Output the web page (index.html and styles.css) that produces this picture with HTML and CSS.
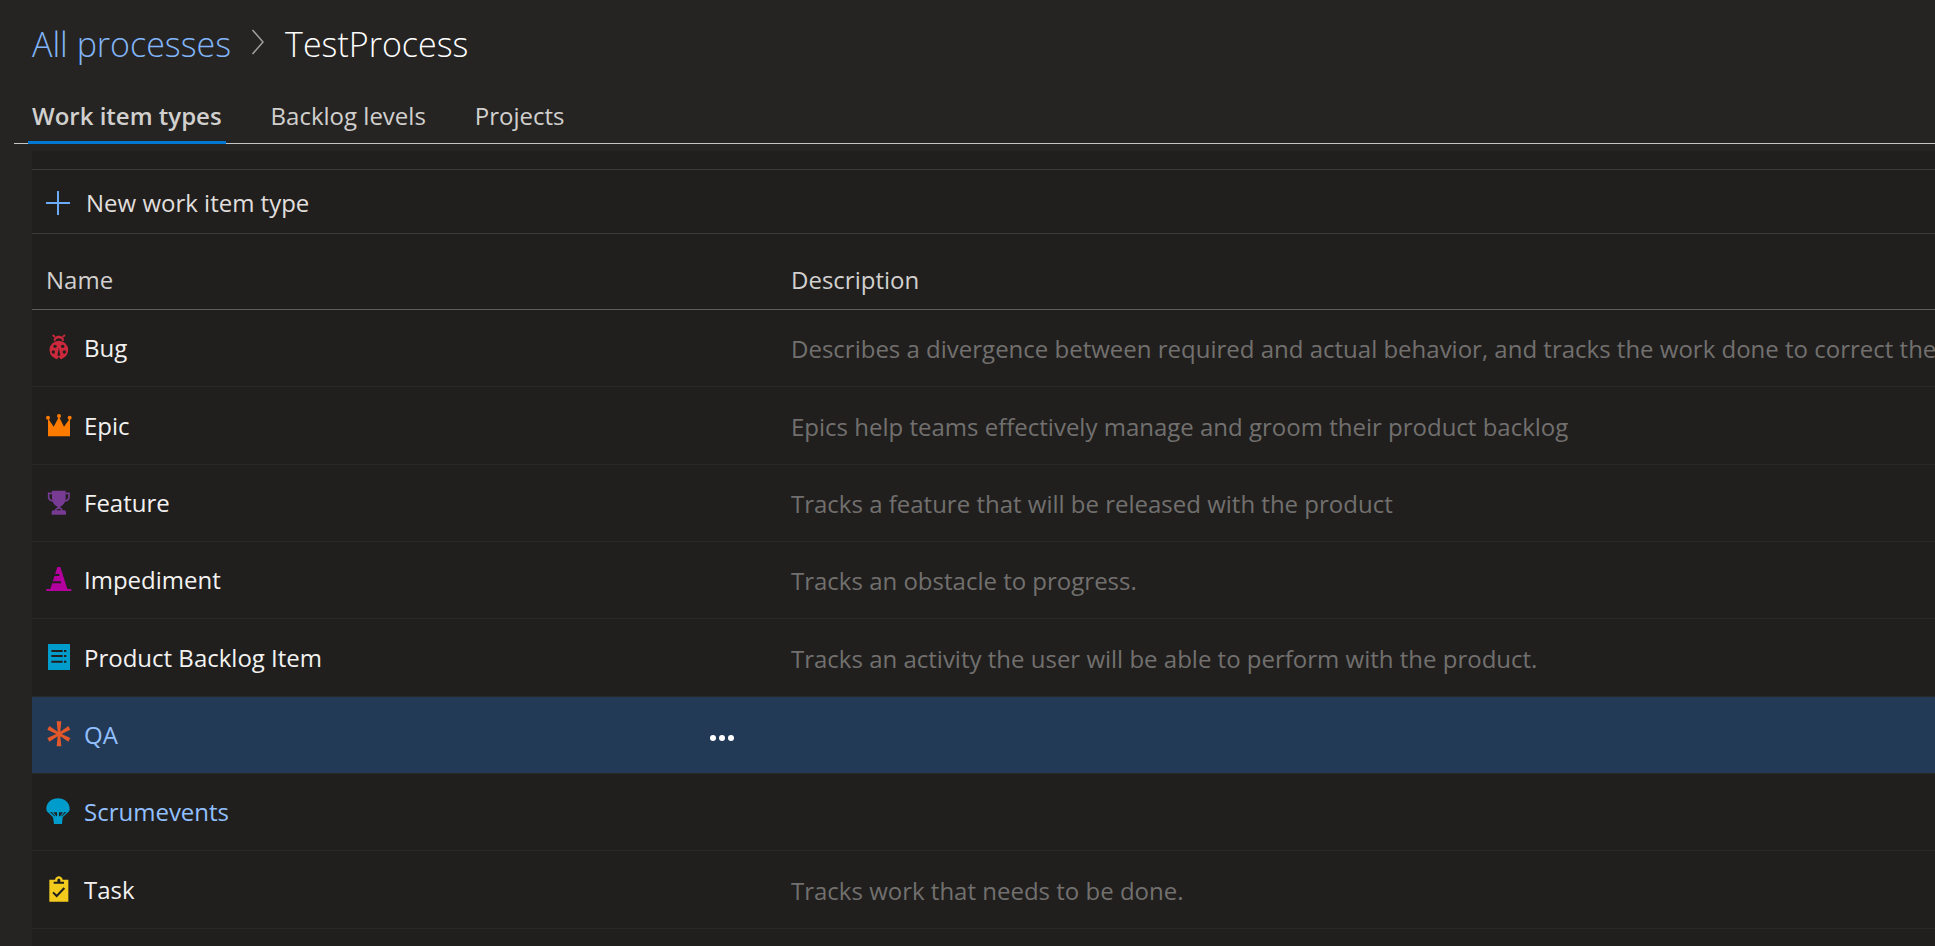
FILE: index.html
```html
<!DOCTYPE html>
<html lang="en">
<head>
    <meta charset="UTF-8">
    <meta name="viewport" content="width=device-width, initial-scale=1.0">
    <title>TestProcess - Work item types</title>
    <link rel="stylesheet" href="styles.css">
</head>
<body>
    <header class="breadcrumb">
        <a href="#" class="parent">All processes</a>
        <svg class="chevron" viewBox="0 0 14 26" aria-hidden="true"><path d="M1.5 1 L12 13 L1.5 25"/></svg>
        <h1>TestProcess</h1>
    </header>

    <nav class="tabs">
        <a href="#" class="tab active">Work item types</a>
        <a href="#" class="tab">Backlog levels</a>
        <a href="#" class="tab">Projects</a>
    </nav>

    <main class="content">
        <div class="toolbar">
            <button type="button" class="new-type">
                <svg class="plus" viewBox="0 0 24 24" aria-hidden="true"><path d="M12 0 V24 M0 12 H24"/></svg>
                New work item type
            </button>
        </div>

        <table class="types">
            <thead>
                <tr>
                    <th class="col-name">Name</th>
                    <th>Description</th>
                </tr>
            </thead>
            <tbody>
                <tr>
                    <td>
                        <div class="name">
                            <svg class="icon bug" viewBox="45 40 84 84" aria-hidden="true">
                                <path class="line" d="M68 43 L75 49 M105 43 L98 49"/>
                                <path fill="currentColor" d="M71 60 C71 40 102 40 102 60 L97 61 C96 50 77 50 76 61 Z"/>
                                <ellipse cx="86.5" cy="88" rx="28" ry="28" fill="currentColor"/>
                                <g class="hole">
                                    <circle cx="75" cy="77" r="5"/>
                                    <circle cx="98" cy="77" r="5"/>
                                    <circle cx="70" cy="94" r="5"/>
                                    <circle cx="103" cy="94" r="5"/>
                                    <path d="M86.5 82 L91 105 H82 Z"/>
                                    <path d="M80 117 L86.5 108 L93 117 Z"/>
                                </g>
                            </svg>
                            <a href="#">Bug</a>
                        </div>
                    </td>
                    <td class="desc">Describes a divergence between required and actual behavior, and tracks the work done to correct the</td>
                </tr>
                <tr>
                    <td>
                        <div class="name">
                            <svg class="icon epic" viewBox="45 273 84 84" aria-hidden="true">
                                <path fill="currentColor" d="M54 346 V292 L71 317 L87 287 L102 317 L120 292 V346 Z"/>
                                <circle cx="54" cy="290" r="6" fill="currentColor"/>
                                <circle cx="87" cy="285" r="6" fill="currentColor"/>
                                <circle cx="119" cy="290" r="6" fill="currentColor"/>
                            </svg>
                            <a href="#">Epic</a>
                        </div>
                    </td>
                    <td class="desc">Epics help teams effectively manage and groom their product backlog</td>
                </tr>
                <tr>
                    <td>
                        <div class="name">
                            <svg class="icon feature" viewBox="45 55 84 84" aria-hidden="true">
                                <path fill="currentColor" d="M66 60 H107 V82 C107 96 99 104 91 108 V111 C96 112 98 115 98 119 H103 Q108 119 108 124 V132 H65 V124 Q65 119 70 119 H75 C75 115 77 112 82 111 V108 C74 104 66 96 66 82 Z"/>
                                <path class="line" d="M67 68 H56 V78 C56 86 62 90 68 91 M106 68 H117 V78 C117 86 111 90 105 91"/>
                                <path class="hole" d="M79 119 C80 114 93 114 94 119 Z"/>
                            </svg>
                            <a href="#">Feature</a>
                        </div>
                    </td>
                    <td class="desc">Tracks a feature that will be released with the product</td>
                </tr>
                <tr>
                    <td>
                        <div class="name">
                            <svg class="icon impediment" viewBox="45 288 84 84" aria-hidden="true">
                                <path fill="currentColor" d="M82 291 H91 L112 357 H124 V363 H49 V357 H61 Z"/>
                                <path class="hole" d="M73 312 H88 V318 H71 Z M67 334 H93 V340 H65 Z"/>
                            </svg>
                            <a href="#">Impediment</a>
                        </div>
                    </td>
                    <td class="desc">Tracks an obstacle to progress.</td>
                </tr>
                <tr>
                    <td>
                        <div class="name">
                            <svg class="icon backlog" viewBox="45 39 84 84" aria-hidden="true">
                                <rect x="54" y="39" width="66" height="78" fill="currentColor"/>
                                <path class="hole" d="M64 57 H98 V63 H64 Z M102 57 H109 V63 H102 Z M64 72 H98 V78 H64 Z M102 72 H109 V78 H102 Z M64 89 H98 V95 H64 Z M102 89 H109 V95 H102 Z"/>
                            </svg>
                            <a href="#">Product Backlog Item</a>
                        </div>
                    </td>
                    <td class="desc">Tracks an activity the user will be able to perform with the product.</td>
                </tr>
                <tr class="selected">
                    <td>
                        <div class="name">
                            <svg class="icon qa" viewBox="45 271 84 84" aria-hidden="true">
                                <path fill="currentColor" d="M80 272 H94 L91 303 L115 286 L121 297 L95 310 L121 322 L115 333 L91 317 L94 347 H80 L83 317 L58 333 L52 322 L79 310 L52 297 L58 286 L83 303 Z"/>
                            </svg>
                            <a href="#" class="custom">QA</a>
                            <button type="button" class="more" aria-label="More actions">
                                <svg viewBox="0 0 24 6" aria-hidden="true"><circle cx="3" cy="3" r="3"/><circle cx="12" cy="3" r="3"/><circle cx="21" cy="3" r="3"/></svg>
                            </button>
                        </div>
                    </td>
                    <td class="desc"></td>
                </tr>
                <tr>
                    <td>
                        <div class="name">
                            <svg class="icon scrum" viewBox="45 54 84 84" aria-hidden="true">
                                <path fill="currentColor" d="M49 87 C49 44 119 44 119 87 C119 91 117 95 114 97 L98 112 L96 132 H72 L69 112 L54 97 C51 95 49 91 49 87 Z"/>
                                <path class="hole" d="M60 96 H65 L76 109 H73 Z M70 97 H81 V109 H79 Z M87 97 H99 L90 109 H87 Z M104 96 H109 L96 109 H93 Z"/>
                            </svg>
                            <a href="#" class="custom">Scrumevents</a>
                        </div>
                    </td>
                    <td class="desc"></td>
                </tr>
                <tr>
                    <td>
                        <div class="name">
                            <svg class="icon task" viewBox="45 286 84 84" aria-hidden="true">
                                <path fill="currentColor" d="M58 297 H75 C77 283 96 283 98 297 H115 V363 H58 Z"/>
                                <path class="hole" d="M71 303 H82 V298 C82 293 91 293 91 298 V303 H102 V309 H71 Z"/>
                                <path class="check" d="M69 335 L80 346 L103 322"/>
                            </svg>
                            <a href="#">Task</a>
                        </div>
                    </td>
                    <td class="desc">Tracks work that needs to be done.</td>
                </tr>
            </tbody>
        </table>
    </main>
</body>
</html>
```
FILE: styles.css
```css
* {
    box-sizing: border-box;
}
body {
    margin: 0;
    min-height: 100vh;
    display: flex;
    flex-direction: column;
    background-color: #252423;
    color: #d2d0ce;
    font-family: "Open Sans", "Noto Sans", sans-serif;
    font-size: 24px;
    line-height: 32px;
}
a {
    color: inherit;
    text-decoration: none;
}
button {
    border: 0;
    padding: 0;
    background: none;
    color: inherit;
    font: inherit;
    cursor: pointer;
}

/* Breadcrumb */
.breadcrumb {
    display: flex;
    align-items: center;
    gap: 20px;
    padding: 20px 32px 0;
    font-size: 34px;
    line-height: 48px;
    font-weight: 300;
}
.breadcrumb h1 {
    margin: 0;
    color: #fff;
    font-size: inherit;
    font-weight: inherit;
}
.parent {
    color: #82b5f8;
}
.chevron {
    width: 14px;
    height: 26px;
    margin-bottom: 4px;
    fill: none;
    stroke: #a19f9d;
    stroke-width: 1.5;
}

/* Tabs */
.tabs {
    display: flex;
    gap: 41px;
    margin-left: 14px;
    padding: 24px 14px 0;
    border-bottom: 1px solid #c8c6c4;
}
.tab {
    margin-bottom: -1px;
    padding: 8px 4px 9px;
    border-bottom: 3px solid transparent;
}
.tab.active {
    border-color: #0078d4;
    font-weight: 600;
}

/* Work item types */
.content {
    flex: 1;
    margin: 7px 0 0 32px;
    padding-top: 18px;
    background-color: #201f1e;
}
.toolbar {
    display: flex;
    height: 65px;
    padding-top: 2px;
    border-top: 1px solid #3b3a39;
    border-bottom: 1px solid #3b3a39;
}
.new-type {
    display: flex;
    align-items: center;
    gap: 16px;
    padding-left: 14px;
    color: #e1dfdd;
}
.plus {
    width: 24px;
    height: 24px;
    stroke: #6cabf7;
    stroke-width: 2;
}
.types {
    width: 100%;
    table-layout: fixed;
    border-collapse: separate;
    border-spacing: 0;
}
.types th {
    height: 76px;
    padding: 17px 13px 0;
    border-bottom: 1px solid #605e5c;
    font-weight: 400;
    text-align: left;
}
.types .col-name {
    width: 746px;
    padding-left: 14px;
}
.types td {
    height: 77px;
    padding: 0 0 0 13px;
    border-bottom: 1px solid #292827;
}
.types tr:nth-child(3n + 2) td {
    height: 78px;
}
.types .desc {
    padding-top: 2px;
    color: #72706e;
    white-space: nowrap;
}
.types .selected td {
    background-color: #233a57;
}
.name {
    display: flex;
    align-items: center;
    gap: 11px;
    padding-right: 34px;
    color: #f3f2f1;
}
.custom {
    color: #92c0ff;
}
.more {
    display: flex;
    align-items: center;
    justify-content: center;
    width: 44px;
    height: 32px;
    margin-left: auto;
    padding-top: 6px;
}
.more svg {
    width: 24px;
    height: 6px;
    fill: #fff;
}

/* Icons */
.icon {
    width: 28px;
    height: 28px;
}
.line {
    fill: none;
    stroke: currentColor;
    stroke-width: 5;
}
.hole {
    fill: #201f1e;
}
.check {
    fill: none;
    stroke: #201f1e;
    stroke-width: 6;
}
.bug {
    color: #cc293d;
}
.epic {
    color: #ff7b00;
}
.feature {
    color: #773b93;
}
.impediment {
    color: #b4009e;
}
.backlog,
.scrum {
    color: #009ccc;
}
.qa {
    color: #e2582a;
}
.task {
    color: #f2cb1d;
}
```
